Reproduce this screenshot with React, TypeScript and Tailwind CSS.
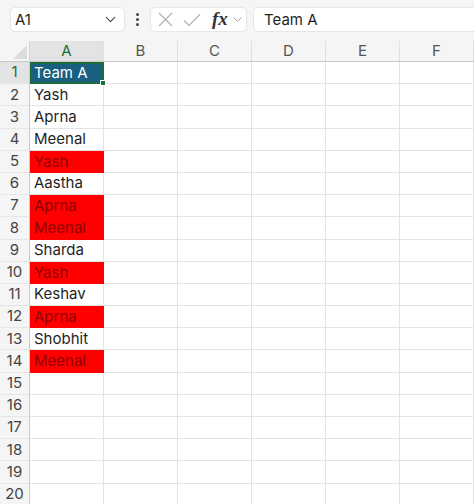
import React from "react";
import { ChevronDown } from "lucide-react";

const cols = ["A", "B", "C", "D", "E", "F"];

const data: { text: string; red?: boolean }[] = [
  { text: "Team A" },
  { text: "Yash" },
  { text: "Aprna" },
  { text: "Meenal" },
  { text: "Yash", red: true },
  { text: "Aastha" },
  { text: "Aprna", red: true },
  { text: "Meenal", red: true },
  { text: "Sharda" },
  { text: "Yash", red: true },
  { text: "Keshav" },
  { text: "Aprna", red: true },
  { text: "Shobhit" },
  { text: "Meenal", red: true },
];

const rows = Array.from({ length: 20 }, (_, i) => i + 1);

export default function App() {
  return (
    <div className="w-[474px] h-[504px] overflow-hidden bg-white font-['Inter','Noto_Sans',sans-serif] text-[#1f1f1f]">
      {/* formula bar */}
      <div className="h-[41px] bg-[#f5f5f5] flex items-start pt-[7px] pl-[10px]">
        <div className="w-[115px] h-[25px] bg-white rounded-[5px] border border-[#e6e6e6] flex items-center pl-[4px] pr-[5px]">
          <span className="text-[15px] flex-1 leading-none">A1</span>
          <ChevronDown size={17} strokeWidth={1.5} className="text-[#444]" />
        </div>
        <div className="w-[25px] h-[25px] flex flex-col items-center justify-center gap-[2px]">
          <span className="w-[3px] h-[3px] rounded-full bg-[#444]" />
          <span className="w-[3px] h-[3px] rounded-full bg-[#444]" />
          <span className="w-[3px] h-[3px] rounded-full bg-[#444]" />
        </div>
        <div className="w-[97px] h-[25px] bg-white rounded-[5px] border border-[#e6e6e6] flex items-center pl-[6px]">
          <svg width="17" height="17" viewBox="0 0 17 17" className="text-[#b0b0b0]">
            <path d="M2 2L15 15M15 2L2 15" stroke="currentColor" strokeWidth="1.1" fill="none" />
          </svg>
          <svg width="18" height="14" viewBox="0 0 18 14" className="text-[#b0b0b0] ml-[9px]">
            <path d="M1 7.5L6 12.5L17 1.5" stroke="currentColor" strokeWidth="1.1" fill="none" />
          </svg>
          <span className="ml-[11px] font-['Liberation_Serif',serif] italic font-bold text-[19px] text-[#333] leading-none -mt-[2px]">
            fx
          </span>
          <ChevronDown size={15} strokeWidth={1.3} className="text-[#888] ml-[2px]" />
        </div>
        <div className="ml-[6px] flex-1 h-[25px] bg-white rounded-l-[5px] border border-r-0 border-[#e6e6e6] flex items-center pl-[10px]">
          <span className="text-[15px] leading-none">Team A</span>
        </div>
      </div>

      {/* grid */}
      <div className="flex flex-col">
        <div className="flex h-[21px] bg-[#f5f5f5] border-b border-[#c8c8c8]">
          <div className="w-[30px] shrink-0 relative border-r border-[#d4d4d4]">
            <div className="absolute right-[2px] bottom-[2px] w-0 h-0 border-l-[14px] border-l-transparent border-b-[14px] border-b-[#dcdcdc]" />
          </div>
          {cols.map((c) => (
            <div
              key={c}
              className={`w-[74px] shrink-0 flex items-center justify-center text-[15px] border-r border-[#e0e0e0] ${
                c === "A" ? "bg-[#e3e3e3] text-[#1e6b3c]" : "text-[#555]"
              }`}
            >
              {c}
            </div>
          ))}
        </div>
        {rows.map((r) => {
          const d = data[r - 1];
          const sel = r === 1;
          return (
            <div key={r} className="flex h-[22.2px] shrink-0">
              <div
                className={`w-[30px] shrink-0 flex items-center justify-center text-[15px] border-r border-[#c8c8c8] border-b border-b-[#e6e6e6] ${
                  sel ? "bg-[#e3e3e3] text-[#1e6b3c]" : "bg-[#f5f5f5] text-[#444]"
                }`}
              >
                {r}
              </div>
              {cols.map((c) => {
                if (c === "A" && d) {
                  if (sel)
                    return (
                      <div
                        key={c}
                        className="w-[74px] shrink-0 relative bg-[#185f80] border-2 border-[#1e6b3c] flex items-center pl-[2px] text-[15px] text-white"
                      >
                        {d.text}
                        <div className="absolute -right-[4px] -bottom-[4px] w-[6px] h-[6px] bg-[#1e6b3c] border border-white" />
                      </div>
                    );
                  return (
                    <div
                      key={c}
                      className={`w-[74px] shrink-0 flex items-center pl-[4px] text-[15px] ${
                        d.red
                          ? "bg-[#ff0000] text-[#8f0000]"
                          : "border-r border-b border-[#e3e3e3]"
                      }`}
                    >
                      {d.text}
                    </div>
                  );
                }
                return (
                  <div
                    key={c}
                    className="w-[74px] shrink-0 border-r border-b border-[#e3e3e3]"
                  />
                );
              })}
            </div>
          );
        })}
      </div>
    </div>
  );
}
